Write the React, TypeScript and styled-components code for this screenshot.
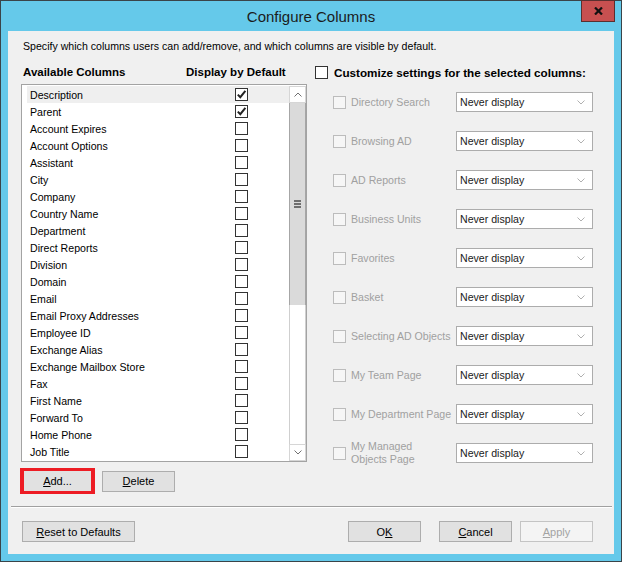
import React from "react";
import styled, { createGlobalStyle } from "styled-components";

const GlobalStyle = createGlobalStyle`
  html, body { margin: 0; padding: 0; background: #ffffff; }
  body {
    font-family: "Liberation Sans", Arial, sans-serif;
    font-size: 10.6px;
    color: #000;
  }
  * { box-sizing: border-box; }
`;

const Window = styled.div`
  position: relative;
  width: 622px;
  height: 562px;
  border: 1px solid #3a4449;
  background: #65c9ea;
  display: flex;
  flex-direction: column;
  padding: 0 7px 7px;
`;

const TitleBar = styled.div`
  height: 30px;
  display: flex;
  align-items: center;
  justify-content: center;
  font-size: 15px;
  color: #1b1b1b;
`;

const CloseButton = styled.div`
  position: absolute;
  top: -1px;
  right: 6px;
  width: 34px;
  height: 22px;
  background: #c75050;
  border: 1px solid #5a2f2f;
  display: flex;
  align-items: center;
  justify-content: center;
`;

const Client = styled.div`
  flex: 1;
  background: #f0f0f0;
  display: flex;
  flex-direction: column;
  padding: 8px 0 11px;
`;

const Intro = styled.div`
  padding-left: 15px;
  line-height: 14px;
`;

const Main = styled.div`
  display: flex;
  gap: 8px;
  margin-top: 11px;
  padding-left: 13px;
`;

const LeftCol = styled.div`
  width: 286px;
  display: flex;
  flex-direction: column;
`;

const ListHeader = styled.div`
  display: grid;
  grid-template-columns: 163px auto;
  align-items: center;
  height: 16px;
  margin-bottom: 4px;
  padding-left: 2px;
  font-weight: bold;
  font-size: 11.5px;
`;

const ListBox = styled.div`
  height: 378px;
  border: 1px solid #a3a3a3;
  background: #fff;
  display: flex;
`;

const Rows = styled.div`
  flex: 1;
  padding: 1px 0 0 5px;
  overflow: hidden;
`;

const Row = styled.div<{ $selected?: boolean }>`
  height: 17px;
  display: flex;
  align-items: center;
  justify-content: space-between;
  padding: 0 41px 0 3px;
  background: ${(p) => (p.$selected ? "#efefef" : "transparent")};
`;

const Box = styled.span<{ $disabled?: boolean }>`
  width: 13px;
  height: 13px;
  flex: none;
  display: inline-flex;
  align-items: center;
  justify-content: center;
  border: 1px solid ${(p) => (p.$disabled ? "#bcbcbc" : "#333")};
  background: ${(p) => (p.$disabled ? "#f6f6f6" : "#fff")};
`;

const ScrollBar = styled.div`
  width: 17px;
  display: flex;
  flex-direction: column;
  padding-top: 1px;
`;

const ArrowButton = styled.div`
  height: 17px;
  background: #fff;
  border: 1px solid #d6d6d6;
  display: flex;
  align-items: center;
  justify-content: center;
`;

const Thumb = styled.div`
  height: 202px;
  background: #dadada;
  border-left: 1px solid #a6a6a6;
  border-right: 1px solid #a6a6a6;
  display: flex;
  align-items: center;
  justify-content: center;
`;

const Grip = styled.div`
  width: 7px;
  height: 8px;
  background: repeating-linear-gradient(
    to bottom,
    #6e6e6e 0 2px,
    transparent 2px 3px
  );
`;

const Track = styled.div`
  flex: 1;
  background: #fff;
  border-left: 1px solid #cfcfcf;
  border-right: 1px solid #cfcfcf;
`;

const ListButtons = styled.div`
  display: flex;
  align-items: center;
  gap: 7px;
  margin: 6px 0 0 -1px;
`;

const HighlightFrame = styled.div`
  border-style: solid;
  border-color: #ed1c24;
  border-width: 3px 4px;
  display: flex;
`;

const Button = styled.button<{ $w: number; $bare?: boolean }>`
  width: ${(p) => p.$w}px;
  height: ${(p) => (p.$bare ? 20 : 21)}px;
  padding: 0;
  font-family: inherit;
  font-size: 11px;
  color: #000;
  background: #e1e1e1;
  border: ${(p) => (p.$bare ? "none" : "1px solid #adadad")};

  &:disabled {
    color: #a3a3a3;
    background: #f4f4f4;
    border-color: #c4c4c4;
  }
`;

const RightCol = styled.div`
  display: flex;
  flex-direction: column;
`;

const RightHeader = styled.div`
  display: flex;
  align-items: center;
  gap: 6px;
  height: 16px;
  font-weight: bold;
  font-size: 11.7px;
`;

const Settings = styled.div`
  display: flex;
  flex-direction: column;
  gap: 19px;
  margin-top: 12px;
  padding-left: 18px;
`;

const SettingRow = styled.div`
  display: grid;
  grid-template-columns: 13px 100px 137px;
  grid-template-rows: 20px;
  column-gap: 5px;
  align-items: center;
  height: 20px;
`;

const SettingLabel = styled.span`
  color: #a0a0a0;
  line-height: 13px;
  white-space: nowrap;
`;

const Select = styled.div`
  height: 20px;
  background: #fff;
  border: 1px solid #acacac;
  display: flex;
  align-items: center;
  justify-content: space-between;
  padding: 0 7px 0 3px;
  color: #1a1a1a;
`;

const Separator = styled.div`
  margin: 12px 2px 0 3px;
  border-top: 1px solid #a0a0a0;
  border-bottom: 1px solid #fff;
`;

const Footer = styled.div`
  display: flex;
  align-items: center;
  margin-top: 13px;
  padding: 0 21px 0 14px;
`;

const FooterRight = styled.div`
  margin-left: auto;
  display: flex;
  gap: 8px;
`;

const Check = () => (
  <svg width="11" height="11" viewBox="0 0 11 11">
    <path d="M1.8 5.6 L4.3 8.2 L9.4 1.9" fill="none" stroke="#222" strokeWidth="2" />
  </svg>
);

const Chevron = ({ up, color }: { up?: boolean; color: string }) => (
  <svg width="8" height="5" viewBox="0 0 8 5">
    <path
      d={up ? "M0.5 4.5 L4 1 L7.5 4.5" : "M0.5 0.5 L4 4 L7.5 0.5"}
      fill="none"
      stroke={color}
      strokeWidth="1"
    />
  </svg>
);

const columns: { name: string; on?: boolean }[] = [
  { name: "Description", on: true },
  { name: "Parent", on: true },
  { name: "Account Expires" },
  { name: "Account Options" },
  { name: "Assistant" },
  { name: "City" },
  { name: "Company" },
  { name: "Country Name" },
  { name: "Department" },
  { name: "Direct Reports" },
  { name: "Division" },
  { name: "Domain" },
  { name: "Email" },
  { name: "Email Proxy Addresses" },
  { name: "Employee ID" },
  { name: "Exchange Alias" },
  { name: "Exchange Mailbox Store" },
  { name: "Fax" },
  { name: "First Name" },
  { name: "Forward To" },
  { name: "Home Phone" },
  { name: "Job Title" },
];

const settings: React.ReactNode[] = [
  "Directory Search",
  "Browsing AD",
  "AD Reports",
  "Business Units",
  "Favorites",
  "Basket",
  "Selecting AD Objects",
  "My Team Page",
  "My Department Page",
  <>
    My Managed
    <br />
    Objects Page
  </>,
];

export default function App() {
  return (
    <>
      <GlobalStyle />
      <Window>
        <TitleBar>Configure Columns</TitleBar>
        <CloseButton>
          <svg width="9" height="8" viewBox="0 0 9 8">
            <path d="M1 0.5 L8 7.5 M8 0.5 L1 7.5" stroke="#111" strokeWidth="2.2" />
          </svg>
        </CloseButton>
        <Client>
          <Intro>
            Specify which columns users can add/remove, and which columns are visible by default.
          </Intro>
          <Main>
            <LeftCol>
              <ListHeader>
                <span>Available Columns</span>
                <span>Display by Default</span>
              </ListHeader>
              <ListBox>
                <Rows>
                  {columns.map((c, i) => (
                    <Row key={c.name} $selected={i === 0}>
                      <span>{c.name}</span>
                      <Box>{c.on && <Check />}</Box>
                    </Row>
                  ))}
                </Rows>
                <ScrollBar>
                  <ArrowButton>
                    <Chevron up color="#707070" />
                  </ArrowButton>
                  <Thumb>
                    <Grip />
                  </Thumb>
                  <Track />
                  <ArrowButton>
                    <Chevron color="#707070" />
                  </ArrowButton>
                </ScrollBar>
              </ListBox>
              <ListButtons>
                <HighlightFrame>
                  <Button $w={67} $bare>
                    <u>A</u>dd...
                  </Button>
                </HighlightFrame>
                <Button $w={73}>
                  <u>D</u>elete
                </Button>
              </ListButtons>
            </LeftCol>
            <RightCol>
              <RightHeader>
                <Box />
                <span>Customize settings for the selected columns:</span>
              </RightHeader>
              <Settings>
                {settings.map((s, i) => (
                  <SettingRow key={i}>
                    <Box $disabled />
                    <SettingLabel>{s}</SettingLabel>
                    <Select>
                      <span>Never display</span>
                      <Chevron color="#b0b0b0" />
                    </Select>
                  </SettingRow>
                ))}
              </Settings>
            </RightCol>
          </Main>
          <Separator />
          <Footer>
            <Button $w={113}>
              <u>R</u>eset to Defaults
            </Button>
            <FooterRight>
              <Button $w={73} style={{ marginRight: 10 }}>
                O<u>K</u>
              </Button>
              <Button $w={73}>
                <u>C</u>ancel
              </Button>
              <Button $w={73} disabled>
                <u>A</u>pply
              </Button>
            </FooterRight>
          </Footer>
        </Client>
      </Window>
    </>
  );
}
